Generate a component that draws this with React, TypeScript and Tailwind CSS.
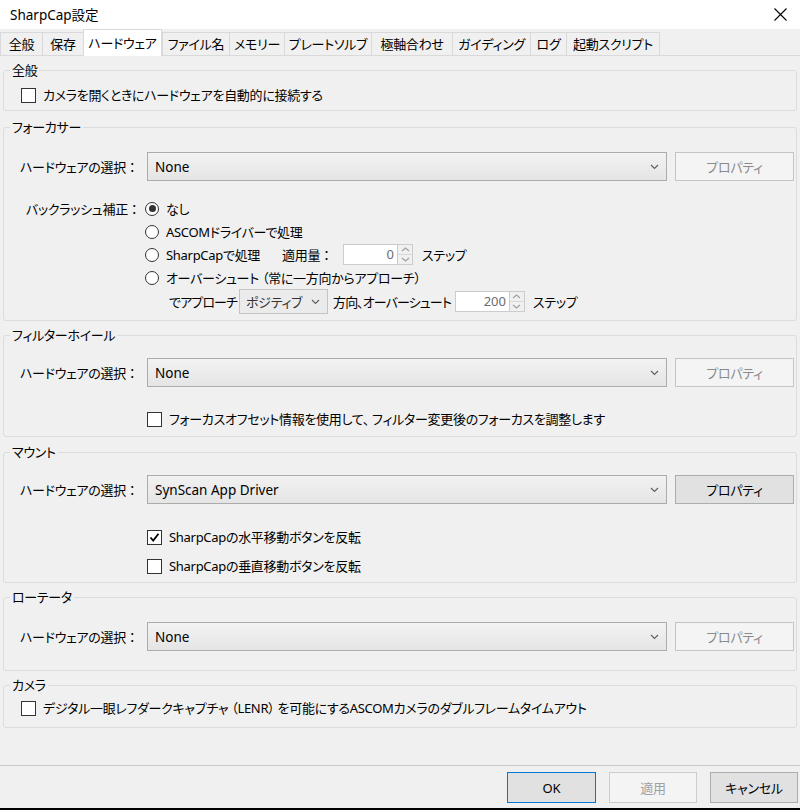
import React from "react";

const Chevron = () => (
  <svg width="9" height="6" viewBox="0 0 9 6" className="shrink-0">
    <path d="M1 1 L4.5 4.5 L8 1" fill="none" stroke="#606060" strokeWidth="1.2" />
  </svg>
);

const CheckBox = ({ checked = false }: { checked?: boolean }) => (
  <span className="w-[15px] h-[15px] shrink-0 border border-[#333333] bg-white flex items-center justify-center">
    {checked && (
      <svg width="11" height="11" viewBox="0 0 11 11">
        <path d="M1.5 5.5 L4.2 8.5 L9.5 1.8" fill="none" stroke="#000" strokeWidth="1.8" />
      </svg>
    )}
  </span>
);

const Radio = ({ checked = false }: { checked?: boolean }) => (
  <span className="w-[14px] h-[14px] shrink-0 rounded-full border border-[#333333] bg-white flex items-center justify-center">
    {checked && <span className="w-[7px] h-[7px] rounded-full bg-[#333333]" />}
  </span>
);

const Combo = ({ value }: { value: string }) => (
  <div className="flex-1 h-[29px] border border-[#acacac] bg-gradient-to-b from-[#f2f2f2] to-[#e5e5e5] flex items-center justify-between pl-[7px] pr-[7px]">
    <span className="tracking-normal text-[13.5px]">{value}</span>
    <Chevron />
  </div>
);

const Spinner = ({ value, className = "" }: { value: string; className?: string }) => (
  <div className={`w-[70px] h-[21px] border border-[#cccccc] bg-white flex shrink-0 ${className}`}>
    <span className="flex-1 text-right pr-[3px] leading-[19px] text-[#6d6d6d] tracking-normal">{value}</span>
    <div className="w-[15px] flex flex-col border-l border-[#cccccc] bg-[#f0f0f0]">
      <div className="flex-1 flex items-center justify-center border-b border-[#d8d8d8]">
        <svg width="9" height="5" viewBox="0 0 9 5">
          <path d="M1 4 L4.5 1 L8 4" fill="none" stroke="#a0a0a0" strokeWidth="1.2" />
        </svg>
      </div>
      <div className="flex-1 flex items-center justify-center">
        <svg width="9" height="5" viewBox="0 0 9 5">
          <path d="M1 1 L4.5 4 L8 1" fill="none" stroke="#a0a0a0" strokeWidth="1.2" />
        </svg>
      </div>
    </div>
  </div>
);

const HwRow = ({ value, enabled, className }: { value: string; enabled: boolean; className: string }) => (
  <div className={`flex items-center pl-[16px] pr-[2px] ${className}`}>
    <span className="w-[127px] shrink-0">ハードウェアの選択 ：</span>
    <Combo value={value} />
    <button
      className={
        enabled
          ? "ml-[8px] w-[119px] h-[29px] border border-[#adadad] bg-[#e1e1e1] text-black"
          : "ml-[8px] w-[119px] h-[29px] border border-[#c4c4c4] bg-[#f4f4f4] text-[#8a8a8a]"
      }
    >
      プロパティ
    </button>
  </div>
);

const Group = ({ title, className, children }: { title: string; className: string; children: React.ReactNode }) => (
  <fieldset className={`mx-[3px] min-w-0 rounded-[3px] border border-[#dcdcdc] ${className}`}>
    <legend className="ml-[6px] px-[2px] leading-[20px]">{title}</legend>
    {children}
  </fieldset>
);

const tabs = [
  { label: "全般", w: "w-[42px]" },
  { label: "保存", w: "w-[41px]" },
  { label: "ハードウェア", w: "w-[79px]", active: true },
  { label: "ファイル名", w: "w-[67px]" },
  { label: "メモリー", w: "w-[55px]" },
  { label: "プレートソルブ", w: "w-[87px]" },
  { label: "極軸合わせ", w: "w-[81px]" },
  { label: "ガイディング", w: "w-[78px]" },
  { label: "ログ", w: "w-[36px]" },
  { label: "起動スクリプト", w: "w-[94px]" },
];

export default function App() {
  return (
    <div className="w-[800px] h-[810px] bg-[#f0f0f0] flex flex-col overflow-hidden whitespace-nowrap text-[13px] leading-[20px] tracking-[-0.3px] text-black font-['Noto_Sans','Noto_Sans_CJK_JP',sans-serif] [font-feature-settings:'palt']">
      {/* Title bar */}
      <div className="h-[29px] bg-white flex items-center justify-between pl-[10px] pr-[13px] shrink-0">
        <span className="text-[13.5px] tracking-normal">SharpCap設定</span>
        <svg width="13" height="13" viewBox="0 0 13 13">
          <path d="M0.5 0.5 L12.5 12.5 M12.5 0.5 L0.5 12.5" stroke="#000" strokeWidth="1.1" />
        </svg>
      </div>

      {/* Tabs */}
      <div className="h-[27px] flex items-end border-b border-[#d9d9d9] shrink-0">
        {tabs.map((t, i) =>
          t.active ? (
            <div
              key={t.label}
              className={`${t.w} h-[27px] -mb-px relative bg-white border-t border-l border-r border-[#d9d9d9] flex items-center justify-center`}
            >
              {t.label}
            </div>
          ) : (
            <div
              key={t.label}
              className={`${t.w} h-[23px] bg-[#f0f0f0] border-t border-l border-[#d9d9d9] flex items-center justify-center ${
                i === tabs.length - 1 ? "border-r" : ""
              }`}
            >
              {t.label}
            </div>
          )
        )}
      </div>

      {/* Content */}
      <div className="flex-1 flex flex-col">
        <Group title="全般" className="mt-[4px] pb-[5px]">
          <div className="mt-[5px] h-[20px] flex items-center pl-[17px] gap-[7px]">
            <CheckBox />
            <span>カメラを開くときにハードウェアを自動的に接続する</span>
          </div>
        </Group>

        <Group title="フォーカサー" className="mt-[6px] pb-[6px]">
          <HwRow value="None" enabled={false} className="mt-[15px]" />
          <div className="mt-[16px] flex">
            <div className="w-[141px] shrink-0 pl-[22px] h-[23px] flex items-center">バックラッシュ補正 ：</div>
            <div className="flex flex-col">
              <div className="h-[23px] flex items-center">
                <Radio checked />
                <span className="ml-[7px]">なし</span>
              </div>
              <div className="h-[23px] flex items-center">
                <Radio />
                <span className="ml-[7px]">ASCOMドライバーで処理</span>
              </div>
              <div className="h-[23px] flex items-center">
                <Radio />
                <span className="ml-[7px] w-[116px]">SharpCapで処理</span>
                <span className="w-[61px]">適用量 ：</span>
                <Spinner value="0" />
                <span className="ml-[9px]">ステップ</span>
              </div>
              <div className="h-[23px] flex items-center">
                <Radio />
                <span className="ml-[7px]">オーバーシュート （常に一方向からアプローチ）</span>
              </div>
              <div className="h-[25px] flex items-center pl-[24px]">
                <span className="tracking-[-0.9px]">でアプローチ</span>
                <div className="ml-[2px] w-[89px] shrink-0 h-[25px] border border-[#c4c4c4] bg-[#ebebeb] flex items-center justify-between pl-[6px] pr-[7px] text-[#333333]">
                  <span>ポジティブ</span>
                  <Chevron />
                </div>
                <span className="ml-[5px] tracking-[-0.9px]">方向、オーバーシュート</span>
                <Spinner value="200" className="ml-[4px]" />
                <span className="ml-[8px]">ステップ</span>
              </div>
            </div>
          </div>
        </Group>

        <Group title="フィルターホイール" className="mt-[4px] pb-[7px]">
          <HwRow value="None" enabled={false} className="mt-[13px]" />
          <div className="mt-[22px] h-[20px] flex items-center pl-[143px] gap-[7px]">
            <CheckBox />
            <span>フォーカスオフセット情報を使用して、 フィルター変更後のフォーカスを調整します</span>
          </div>
        </Group>

        <Group title="マウント" className="mt-[5px] pb-[6px]">
          <HwRow value="SynScan App Driver" enabled className="mt-[13px]" />
          <div className="mt-[23px] h-[20px] flex items-center pl-[143px] gap-[7px]">
            <CheckBox checked />
            <span>SharpCapの水平移動ボタンを反転</span>
          </div>
          <div className="mt-[9px] h-[20px] flex items-center pl-[143px] gap-[7px]">
            <CheckBox />
            <span>SharpCapの垂直移動ボタンを反転</span>
          </div>
        </Group>

        <Group title="ローテータ" className="mt-[4px] pb-[19px]">
          <HwRow value="None" enabled={false} className="mt-[15px]" />
        </Group>

        <Group title="カメラ" className="mt-[4px] pb-[9px]">
          <div className="mt-[3px] h-[20px] flex items-center pl-[17px] gap-[7px]">
            <CheckBox />
            <span>デジタル一眼レフダークキャプチャ （LENR） を可能にするASCOMカメラのダブルフレームタイムアウト</span>
          </div>
        </Group>
      </div>

      {/* Bottom buttons */}
      <div className="shrink-0 border-t border-[#c8c8c8] pt-[6px] pb-[5px] pr-[2px] flex justify-end gap-[13px]">
        <button className="w-[89px] h-[31px] border border-[#0078d7] bg-[#e1e1e1] tracking-normal">OK</button>
        <button className="w-[88px] h-[31px] border border-[#cccccc] bg-[#f4f4f4] text-[#a0a0a0]">適用</button>
        <button className="w-[88px] h-[31px] border border-[#adadad] bg-[#e1e1e1]">キャンセル</button>
      </div>
      <div className="h-[2px] bg-black shrink-0" />
    </div>
  );
}
